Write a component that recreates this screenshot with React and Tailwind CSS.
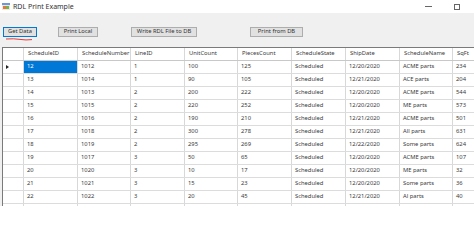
const columns = [
  "ScheduleID",
  "ScheduleNumber",
  "LineID",
  "UnitCount",
  "PiecesCount",
  "ScheduleState",
  "ShipDate",
  "ScheduleName",
  "SqFt",
];

const rows = [
  ["12", "1012", "1", "100", "125", "Scheduled", "12/20/2020", "ACME parts", "234"],
  ["13", "1014", "1", "90", "105", "Scheduled", "12/21/2020", "ACE parts", "204"],
  ["14", "1013", "2", "200", "222", "Scheduled", "12/20/2020", "ACME parts", "544"],
  ["15", "1015", "2", "220", "252", "Scheduled", "12/20/2020", "ME parts", "573"],
  ["16", "1016", "2", "190", "210", "Scheduled", "12/21/2020", "ACME parts", "501"],
  ["17", "1018", "2", "300", "278", "Scheduled", "12/21/2020", "All parts", "631"],
  ["18", "1019", "2", "295", "269", "Scheduled", "12/22/2020", "Some parts", "624"],
  ["19", "1017", "3", "50", "65", "Scheduled", "12/20/2020", "ACME parts", "107"],
  ["20", "1020", "3", "10", "17", "Scheduled", "12/20/2020", "ME parts", "32"],
  ["21", "1021", "3", "15", "23", "Scheduled", "12/20/2020", "Some parts", "36"],
  ["22", "1022", "3", "20", "45", "Scheduled", "12/21/2020", "Al parts", "40"],
  ["", "", "", "", "", "", "", "", ""],
];

const gridCols = "grid grid-cols-[21px_54px_53px_54px_53px_54px_54px_54px_53px_54px]";

function AppIcon() {
  return (
    <svg width="8" height="7" viewBox="0 0 8 7">
      <rect x="0" y="0" width="8" height="7" fill="#e8e8e8" />
      <rect x="0" y="0" width="8" height="2" fill="#6d9ad6" />
      <rect x="1" y="3" width="3" height="3" fill="#e07b39" />
      <rect x="4" y="3" width="3" height="3" fill="#7cb342" />
    </svg>
  );
}

function Button({ children, className }) {
  return (
    <button
      className={
        "h-[10px] flex items-center justify-center bg-[#e1e1e1] border text-[5.8px] leading-none text-[#333] " +
        className
      }
    >
      {children}
    </button>
  );
}

export default function App() {
  return (
    <div
      className="w-[474px] h-[206px] overflow-hidden bg-[#f0f0f0] flex flex-col"
      style={{ fontFamily: '"Noto Sans", "Open Sans", sans-serif' }}
    >
      {/* title bar */}
      <div className="h-[13px] bg-white flex items-center shrink-0">
        <div className="ml-[2px] mr-[3px]">
          <AppIcon />
        </div>
        <span className="text-[7px] leading-none text-[#333]">RDL Print Example</span>
        <div className="ml-auto flex items-center">
          <div className="w-[7px] h-px bg-[#666] mr-[22px]" />
          <div className="w-[6px] h-[6px] border border-[#666] mr-[14px]" />
        </div>
      </div>

      {/* buttons */}
      <div className="h-[34px] flex items-start pt-[14px] shrink-0">
        <div className="relative ml-[3px]">
          <Button className="w-[34px] border-[#0078d7]">Get Data</Button>
          <svg className="absolute left-[3px] top-[11px]" width="27" height="3" viewBox="0 0 27 3">
            <path d="M0 1 Q8 0.4 14 1.4 T26 1.6" stroke="#e53935" strokeWidth="1" fill="none" />
          </svg>
        </div>
        <Button className="ml-[21px] w-[40px] border-[#adadad]">Print Local</Button>
        <Button className="ml-[33px] w-[66px] border-[#adadad]">Write RDL File to DB</Button>
        <Button className="ml-[53px] w-[53px] border-[#adadad]">Print from DB</Button>
      </div>

      {/* data grid */}
      <div className="ml-[2px] flex-1 bg-white border-l border-t border-[#7a7a7a] text-[5.8px] text-[#3a3a3a] leading-none">
        <div className={gridCols + " h-[13px] border-b border-[#c8c8c8]"}>
          <div className="border-r border-[#d8d8d8]" />
          {columns.map((c) => (
            <div key={c} className="border-r border-[#d8d8d8] flex items-center pl-[4px] whitespace-nowrap">
              {c}
            </div>
          ))}
        </div>
        {rows.map((r, i) => (
          <div key={i} className={gridCols + " h-[13px] border-b border-[#dcdcdc]"}>
            <div className="border-r border-[#d8d8d8] flex items-center pl-[3px]">
              {i === 0 && (
                <svg width="3" height="4" viewBox="0 0 3 4">
                  <path d="M0 0 L3 2 L0 4 Z" fill="#222" />
                </svg>
              )}
            </div>
            {r.map((v, j) => (
              <div
                key={j}
                className={
                  "border-r border-[#d8d8d8] flex items-center pl-[3px] whitespace-nowrap " +
                  (i === 0 && j === 0 ? "bg-[#0078d7] text-white" : "")
                }
              >
                {v}
              </div>
            ))}
          </div>
        ))}
      </div>
    </div>
  );
}
